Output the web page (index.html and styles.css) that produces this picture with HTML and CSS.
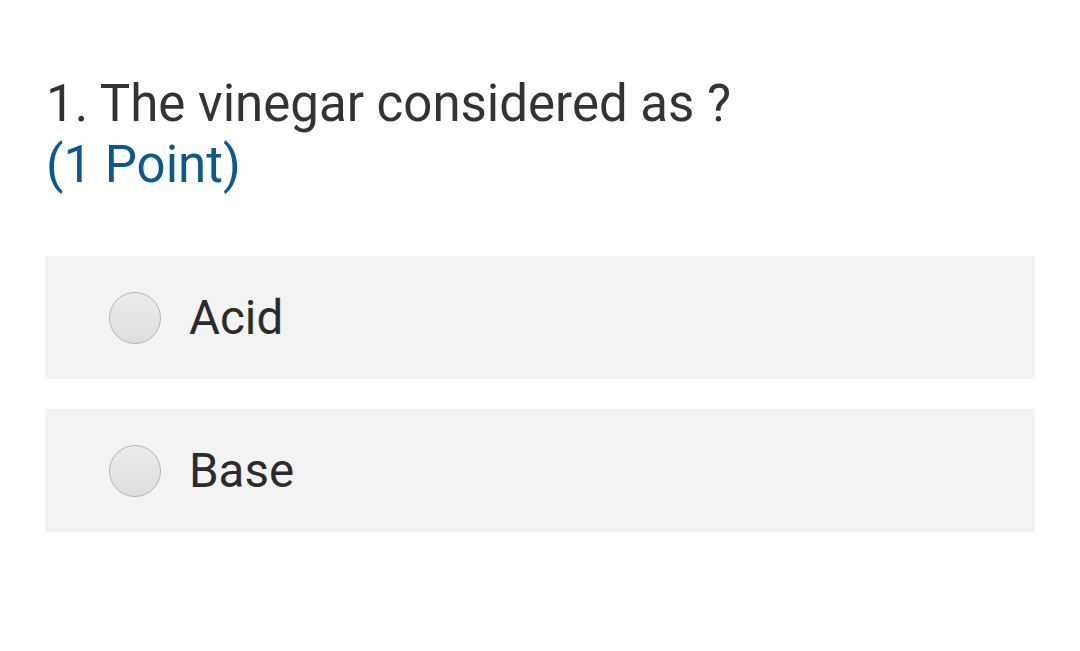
FILE: index.html
```html
<!DOCTYPE html>
<html>
<head>
<meta charset="utf-8">
<link rel="stylesheet" href="styles.css">
</head>
<body>
<div class="page">
  <div class="question">
    <div class="title">1. The vinegar considered as ?</div>
    <div class="points">(1 Point)</div>
  </div>
  <div class="options">
    <label class="option"><span class="radio"></span><span class="label">Acid</span></label>
    <label class="option"><span class="radio"></span><span class="label">Base</span></label>
  </div>
</div>
</body>
</html>
```
FILE: styles.css
```css
html, body {
  margin: 0;
  padding: 0;
  background: #ffffff;
}
body {
  font-family: Roboto, "Noto Sans", sans-serif;
  color: #333333;
}
.page {
  padding: 73px 45px 0 45px;
}
.question {
  padding-left: 1px;
  font-size: 51px;
  line-height: 61px;
}
.title {
  color: #333333;
}
.points {
  color: #0b5a8a;
}
.options {
  margin-top: 61px;
  display: flex;
  flex-direction: column;
  gap: 30px;
  width: 990px;
}
.option {
  display: flex;
  align-items: center;
  height: 123px;
  background: #f3f3f3;
  padding-left: 64px;
}
.radio {
  width: 50px;
  height: 50px;
  border-radius: 50%;
  border: 1px solid #b5b5b5;
  background: linear-gradient(#ebebeb, #dedede);
  flex: none;
}
.label {
  margin-left: 28px;
  font-size: 47.5px;
  color: #2b2b2b;
}
```
